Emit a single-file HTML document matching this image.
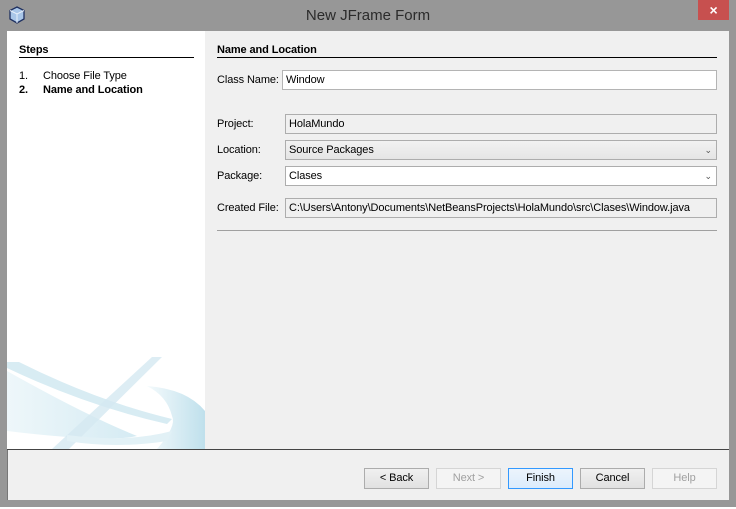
<!DOCTYPE html>
<html><head><meta charset="utf-8"><style>
*{margin:0;padding:0;box-sizing:border-box}
body{width:736px;height:509px;background:#fff;position:relative;overflow:hidden;font-family:"Liberation Sans",sans-serif;font-size:11px;color:#000;letter-spacing:-0.1px}
.frame{position:absolute;left:0;top:0;width:736px;height:507px;background:#979797}
.title{position:absolute;left:0;top:7px;width:736px;text-align:center;font-size:15px;color:#2b2b2b;letter-spacing:0}
.close{position:absolute;left:698px;top:0;width:31px;height:20px;background:#c7504f;color:#fff;font-size:14px;font-weight:bold;text-align:center;line-height:20px}
.content{position:absolute;left:7px;top:31px;width:722px;height:469px;background:#f0f0f0;border-left:1px solid #777}
.left{position:absolute;left:7px;top:31px;width:198px;height:418px;background:#fff;overflow:hidden}
.sep{position:absolute;left:7px;top:449px;width:722px;height:1px;background:#444}
.abs{position:absolute}
.b{font-weight:bold}
.field{position:absolute;height:20px;border:1px solid #adadad;background:#fff;padding-left:3px;line-height:18px}
.ro{background:#f0f0f0}
.combo{background:linear-gradient(#f2f2f2,#e5e5e5)}
.arrow{position:absolute;right:4px;top:0;color:#555;font-size:9px}
.btn{position:absolute;top:468px;height:21px;width:65px;border:1px solid #acacac;background:linear-gradient(#f0f0f0,#e1e1e1);text-align:center;line-height:19px}
.dis{color:#a0a0a0;border-color:#d5d5d5;background:#f4f4f4}
</style></head><body>
<div class="frame"></div>
<svg class="abs" style="left:9px;top:6px" width="16" height="18" viewBox="0 0 16 18"><path d="M8 1 L15 4.5 L15 13 L8 17 L1 13 L1 4.5 Z" fill="#a9c6e8" stroke="#1f3060" stroke-width="1.3"/><path d="M1 4.5 L8 8 L15 4.5 M8 8 L8 17" fill="none" stroke="#e8f0fa" stroke-width="1"/></svg>
<div class="title">New JFrame Form</div>
<div class="close">×</div>
<div class="content"></div>
<div class="left">
<svg width="198" height="418" style="position:absolute;left:0;top:0">
<defs>
<linearGradient id="g" x1="0" y1="0" x2="1" y2="0"><stop offset="0" stop-color="#f4fafc"/><stop offset="1" stop-color="#bfe0ec"/></linearGradient>
<linearGradient id="g2" x1="0" y1="0" x2="1" y2="0"><stop offset="0" stop-color="#eef7fa"/><stop offset="1" stop-color="#d5ebf3"/></linearGradient>
</defs>
<path d="M0 340 Q80 385 130 405 Q100 412 0 400 Z" fill="url(#g2)"/>
<path d="M0 331 L12 331 Q90 370 165 388 L160 393 Q80 375 0 337 Z" fill="#d8ecf3"/>
<path d="M140 355 Q180 358 198 380 L198 418 L150 418 Q170 395 165 385 Q160 365 140 355 Z" fill="url(#g)"/>
<path d="M155 326 L145 326 L45 418 L62 418 Z" fill="#d4e9f1" opacity="0.8"/>
<path d="M60 404 Q120 412 165 400 L160 410 Q110 418 60 410 Z" fill="#e2f1f6"/>
</svg>
<div class="abs b" style="left:12px;top:13px">Steps</div>
<div class="abs" style="left:12px;top:26px;width:175px;height:1px;background:#000"></div>
<div class="abs" style="left:12px;top:39px">1.</div>
<div class="abs" style="left:36px;top:39px">Choose File Type</div>
<div class="abs b" style="left:12px;top:53px">2.</div>
<div class="abs b" style="left:36px;top:53px">Name and Location</div>
</div>
<div class="sep"></div>
<div class="abs b" style="left:217px;top:44px">Name and Location</div>
<div class="abs" style="left:217px;top:57px;width:500px;height:1px;background:#000"></div>
<div class="abs" style="left:217px;top:74px">Class Name:</div>
<div class="field" style="left:282px;top:70px;width:435px;border-color:#b4b4b4">Window</div>
<div class="abs" style="left:217px;top:118px">Project:</div>
<div class="field ro" style="left:285px;top:114px;width:432px">HolaMundo</div>
<div class="abs" style="left:217px;top:144px">Location:</div>
<div class="field combo" style="left:285px;top:140px;width:432px">Source Packages<span class="arrow">&#8964;</span></div>
<div class="abs" style="left:217px;top:170px">Package:</div>
<div class="field" style="left:285px;top:166px;width:432px">Clases<span class="arrow">&#8964;</span></div>
<div class="abs" style="left:217px;top:202px">Created File:</div>
<div class="field ro" style="left:285px;top:198px;width:432px">C:\Users\Antony\Documents\NetBeansProjects\HolaMundo\src\Clases\Window.java</div>
<div class="abs" style="left:217px;top:230px;width:500px;height:1px;background:#a0a0a0"></div>
<div class="btn" style="left:364px">&lt; Back</div>
<div class="btn dis" style="left:436px">Next &gt;</div>
<div class="btn" style="left:508px;border-color:#3399ff;background:linear-gradient(#ecf4fc,#dcecfc)">Finish</div>
<div class="btn" style="left:580px">Cancel</div>
<div class="btn dis" style="left:652px">Help</div>
</body></html>
